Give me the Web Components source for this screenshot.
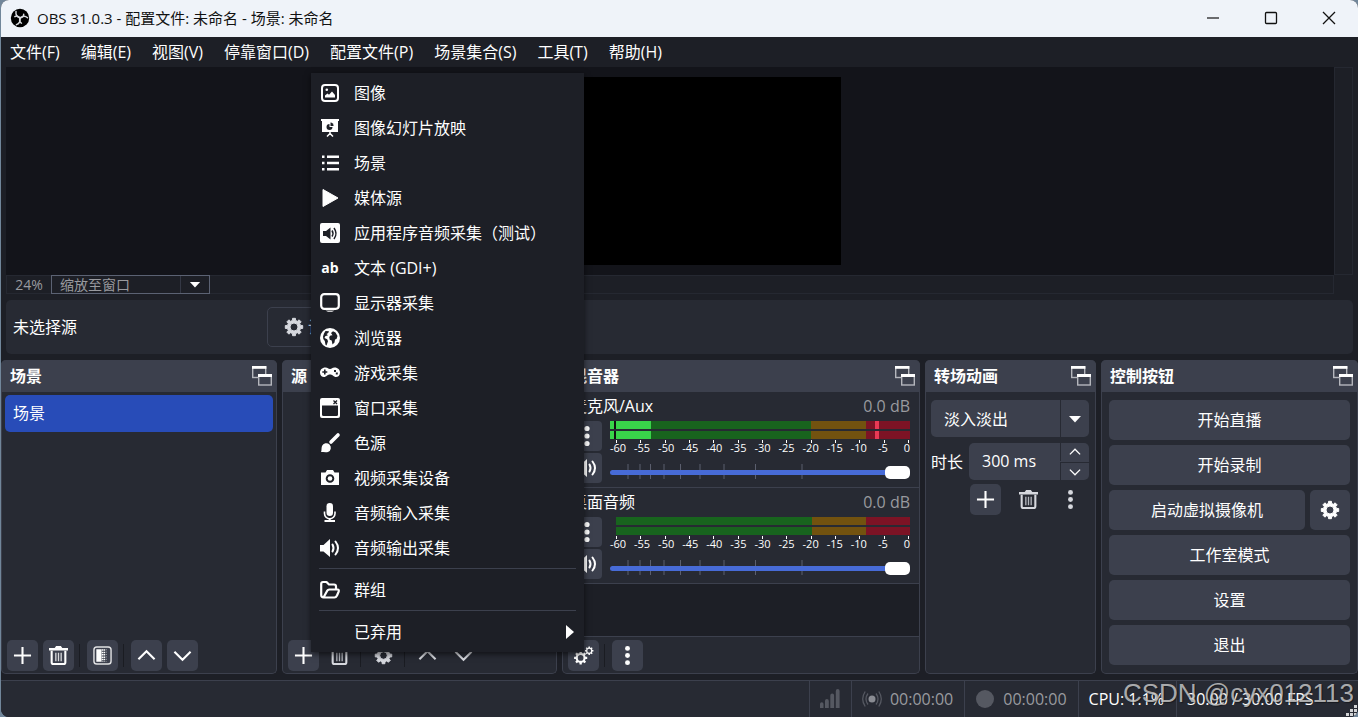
<!DOCTYPE html>
<html lang="zh-CN">
<head>
<meta charset="utf-8">
<title>OBS 31.0.3</title>
<style>
:root {
  --bg: #1d1f26; --panel: #272a33; --line: #3c404d; --btn: #3c404d; --dark: #13141a;
  --muted: #999a9f; --accent: #284cb8;
}
html, body { height: 100%; margin: 0; }
body {
  background: #71869a; color: #fefefe;
  font: 16px/22px "Open Sans", "Noto Sans CJK SC", sans-serif;
}
</style>
</head>
<body>
<obs-app></obs-app>
<script>
const BASE = `*,*::before,*::after{box-sizing:border-box}
button,input,select{font:inherit;color:inherit;margin:0;border:0;padding:0;background:none}
svg{display:block}`;

function define(tag, css, html) {
  customElements.define(tag, class extends HTMLElement {
    connectedCallback() {
      if (this.shadowRoot) return;
      const root = this.attachShadow({ mode: 'open' });
      const t = document.createElement('template');
      t.innerHTML = `<style>${BASE}${css}</style>${typeof html === 'function' ? html(this) : html}`;
      root.append(t.content.cloneNode(true));
    }
  });
}

/* All icons share a 20 x 20 box. */
const gearPath = (cx, cy, r, n, hole) => {
  let d = '';
  for (let i = 0; i < n; i++) {
    const a = i * 2 * Math.PI / n, s = Math.PI / n;
    [[-.62, .76], [-.42, 1], [.42, 1], [.62, .76]].forEach(([o, k], j) => {
      const x = cx + Math.sin(a + o * s) * r * k, y = cy - Math.cos(a + o * s) * r * k;
      d += (i || j ? 'L' : 'M') + x.toFixed(2) + ' ' + y.toFixed(2);
    });
  }
  return d + `Z M${cx - hole} ${cy}a${hole} ${hole} 0 1 0 ${hole * 2} 0a${hole} ${hole} 0 1 0 ${-hole * 2} 0Z`;
};
const swirl = 'M6 3.600C5.400 7 7.400 9.300 10 9.600C12.600 9.800 13.800 8.200 13.700 6.200';
const ICONS = {
  logo: `<circle cx="10" cy="10" r="9.2" fill="#000"/><g fill="none" stroke="#d8dade" stroke-width="1.500" stroke-linecap="round"><path d="${swirl}"/><path d="${swirl}" transform="rotate(120 10 10)"/><path d="${swirl}" transform="rotate(240 10 10)"/></g>`,
  image: `<rect x="2" y="2" width="16" height="16" rx="3" fill="none" stroke="currentColor" stroke-width="2"/><circle cx="6.800" cy="6.800" r="1.300"/><path d="M5 14.500v-2l2.500-2 1.500 1.200 3-3.200 3 3.500v2.500z"/>`,
  slides: `<path fill-rule="evenodd" d="M1 1h18v2h-1v11H2V3H1zM9.500 6a3 3 0 1 0 3 3h-3z"/><path d="M10.500 4.500v3.500h3a3 3 0 0 0-3-3.500z" fill="#1d1f26"/><path d="M10 13v3M10 15.500l-3 3M10 15.500l3 3" fill="none" stroke="currentColor" stroke-width="1.500"/>`,
  list: `<path d="M2 2.500h2.500V5H2zM7 2.500h12V5H7zM2 8.800h2.500v2.500H2zM7 8.800h12v2.500H7zM2 15h2.500v2.500H2zM7 15h12v2.500H7z"/>`,
  play: `<path d="M3 1.500 18 10 3 18.500z" stroke="currentColor" stroke-linejoin="round"/>`,
  appaudio: `<rect width="20" height="20" rx="2"/><path d="M3 8h3L10.500 4.500v12L6 13H3z" fill="#1d1f26"/><path d="M12 7.500q2 3 0 6M14 5q4 5.500 0 11" fill="none" stroke="#1d1f26" stroke-width="1.500"/>`,
  monitor: `<rect x="1.200" y="1.200" width="17.600" height="14.600" rx="3" fill="none" stroke="currentColor" stroke-width="2.200"/><path d="M5.500 17.500h9l-2.500 1.500H8z" opacity=".75"/>`,
  globe: `<circle cx="10" cy="10" r="10"/><path fill="#1d1f26" d="M5.500 3 9 3.200 8.200 5l-1.700 1L8 7.200 5.200 8.200 4.500 10l2.700 1.200.8 2-1.500 4.200-1-.6-.7-3.800-1.500-2L3 8.500l1-3zM11 5l2-1.800 2.500 1.300L17.500 8l-1 3-1.500.5-.5 3-2 2-.8-4-2-.8L9.200 9l1.300-1.500 2-.3z"/>`,
  game: `<path fill-rule="evenodd" d="M5.500 4.500C8 4.500 8 6 10 6s2-1.500 4.500-1.500C18 4.500 20 7 20 9.500c0 3-2 4.500-4 4.500-2.500 0-3-2.500-6-2.500S6.500 14 4 14c-2 0-4-1.500-4-4.500C0 7 2 4.500 5.500 4.500zM4 6.500v1.700H2.300v1.600H4v1.700h1.600V9.800h1.700V8.200H5.600V6.500zM14 7v2h2V7zM15.800 9.500v2h2v-2z"/>`,
  window: `<path fill-rule="evenodd" d="M2 0h16a2 2 0 0 1 2 2v16a2 2 0 0 1-2 2H2a2 2 0 0 1-2-2V2a2 2 0 0 1 2-2zM2 7.500v9a1.500 1.500 0 0 0 1.500 1.500h13a1.500 1.500 0 0 0 1.500-1.500v-9z"/><path d="M13.500 2.500 17 6M17 2.500 13.500 6" stroke="#1d1f26" stroke-width="1.300"/>`,
  brush: `<path d="M18 2 11 9" fill="none" stroke="currentColor" stroke-width="3.600" stroke-linecap="round"/><path d="M1 19c.8-1 .2-4 1-6a4.600 4.600 0 1 1 6 6c-2 .5-5 0-7 0z"/>`,
  camera: `<path fill-rule="evenodd" d="M1 4.500h4.500L7 2h6l1.500 2.500H19V17H1zM10 6.200a4.300 4.300 0 1 0 0 8.600 4.300 4.300 0 0 0 0-8.600z"/><circle cx="10" cy="10.500" r="2.300"/>`,
  mic: `<rect x="6.500" y="0" width="6.500" height="13" rx="3.250"/><path d="M4.500 8.500v2a5.200 5.200 0 0 0 10.500 0v-2" fill="none" stroke="currentColor" stroke-width="1.600"/><path d="M8.700 15h2v2H15v2H4.500v-2h4.200z"/>`,
  speaker: `<path d="M0 7h3.500L10 1v18l-6.500-5.500H0z"/><path d="M12.500 6.500q2 3.500 0 7M15.500 3.500q5 6.500 0 13" fill="none" stroke="currentColor" stroke-width="2" stroke-linecap="round"/>`,
  folder: `<path d="M3.500 17.500H14.500Q16 17.500 17 15.500L18.500 12Q19.500 9.500 17.500 9.500H9.500Q7.500 9.500 6.500 12zM3.500 17.500Q1.200 17.500 1.200 15V4Q1.200 2 3 2h3.500l2.500 2.500h5q2 0 2 2v2.500" fill="none" stroke="currentColor" stroke-width="2.200" stroke-linejoin="round"/>`,
  plus: `<path d="M10 1v18M1 10h18" fill="none" stroke="currentColor" stroke-width="2.200"/>`,
  trash: `<path d="M0 2h6L7.500 0h5L14 2h6v2.800H0z"/><path d="M2.800 5v12q0 2 2 2h10.400q2 0 2-2V5" fill="none" stroke="currentColor" stroke-width="2.200"/><path d="M7.200 7v9M10 7v9M12.800 7v9" fill="none" stroke="currentColor" stroke-width="1.400" opacity=".8"/>`,
  filter: `<rect x="1" y="1" width="18" height="18" rx="3" fill="none" stroke="currentColor" stroke-width="1.500" opacity=".85"/><path d="M3.500 3.500H9v13H3.500z"/><path d="M10 3.500v13M12 3.500v13" fill="none" stroke="currentColor" stroke-width="1.600" stroke-dasharray="1.500 1"/><path d="M14 3.500v13" fill="none" stroke="currentColor" stroke-dasharray="1 1.500" opacity=".6"/>`,
  up: `<path d="M1.500 14 10 5.500l8.500 8.500" fill="none" stroke="currentColor" stroke-width="2.200"/>`,
  down: `<path d="M1.500 6 10 14.500 18.500 6" fill="none" stroke="currentColor" stroke-width="2.200"/>`,
  gear: `<path fill-rule="evenodd" stroke="currentColor" stroke-linejoin="round" d="${gearPath(10, 10, 8.8, 8, 4)}"/>`,
  gears: `<path fill-rule="evenodd" d="${gearPath(7, 12.500, 7, 8, 3)}"/><path fill-rule="evenodd" d="${gearPath(16, 5, 4.500, 8, 2)}"/>`,
  dots: `<circle cx="10" cy="2.500" r="2.600"/><circle cx="10" cy="10" r="2.600"/><circle cx="10" cy="17.500" r="2.600"/>`,
  dock: `<rect x=".7" y="1" width="13" height="10.500" fill="none" stroke="#b4b6bc" stroke-width="1.400"/><path d="M0 0h14.400v2.800H0z"/><rect x="6.700" y="9" width="12.600" height="10" fill="#3c404d" stroke="#b4b6bc" stroke-width="1.400"/><path d="M6 8h14v3H6z"/>`,
  caret: `<path d="M4 7h12l-6 6.500z"/>`,
  next: `<path d="M6 3v14l8-7z"/>`,
  bars: `<path d="M0 15a1.500 1.500 0 0 1 3.500 0v4H0zM5 12a1.500 1.500 0 0 1 3.800 0v7H5zM10.300 6.500a1.500 1.500 0 0 1 3.800 0V19h-3.800zM15.800 2a1.500 1.500 0 0 1 3.800 0v17h-3.800z"/>`,
  live: `<circle cx="10" cy="10" r="3.500" fill="#8a8c93"/><path d="M6 4.500q-4 5.500 0 11M14 4.500q4 5.500 0 11M3.200 2.500q-5 7.500 0 15M16.800 2.500q5 7.500 0 15" fill="none" stroke="currentColor" stroke-width="1.300"/>`,
  disc: `<circle cx="10" cy="10" r="9"/>`,
  min: `<path d="M4 10h12" stroke="currentColor" stroke-width="1.200"/>`,
  max: `<rect x="4.500" y="4.500" width="11" height="11" rx="1" fill="none" stroke="currentColor" stroke-width="1.300"/>`,
  close: `<path d="m4 4 12 12M16 4 4 16" stroke="currentColor" stroke-width="1.300"/>`,
  grip: `<path d="M16 8h3v3h-3zM12 12h3v3h-3zM16 12h3v3h-3zM8 16h3v3H8zM12 16h3v3h-3zM16 16h3v3h-3z" opacity=".8"/>`
};

define('obs-icon', `:host{display:block;flex:none;width:20px;height:20px}
svg{width:100%;height:100%;fill:currentColor;overflow:visible}
b{display:block;font-size:14px;line-height:20px;text-align:center}`,
  el => el.getAttribute('name') === 'ab' ? '<b>ab</b>'
    : `<svg viewBox="0 0 20 20" aria-hidden="true">${ICONS[el.getAttribute('name')]}</svg>`);

define('obs-titlebar', `:host{display:flex;align-items:center;height:37px;padding:0 0 2px 9px;gap:7px;background:#eff3f9;color:#111;font-size:15px}
.t{flex:1;white-space:nowrap}
.w{display:flex}button{width:58px;height:36px;display:grid;place-items:center}`,
  `<obs-icon name="logo"></obs-icon><span class="t">OBS 31.0.3 - 配置文件: 未命名 - 场景: 未命名</span>
  <div class="w"><button aria-label="最小化"><obs-icon name="min"></obs-icon></button><button aria-label="最大化"><obs-icon name="max"></obs-icon></button><button aria-label="关闭"><obs-icon name="close"></obs-icon></button></div>`);

define('obs-menubar', `:host{display:flex;height:30px;background:var(--bg)}
button{padding:0 12px 0 9px;white-space:nowrap}`,
  ['文件(F)', '编辑(E)', '视图(V)', '停靠窗口(D)', '配置文件(P)', '场景集合(S)', '工具(T)', '帮助(H)'].map(t => `<button>${t}</button>`).join(''));

define('obs-preview', `:host{display:grid;grid-template:minmax(208px,1fr) 19px/minmax(0,1fr) 19px;padding:0 5px;flex:1}
.view{background:var(--dark);display:flex;justify-content:center;padding:10px 0 10px 7px}
.canvas{background:#000;height:100%;aspect-ratio:16/9}
.v,.h{border:1px solid #252831}
.h{display:flex;align-items:center;color:var(--muted);font-size:14px;line-height:17px}
.h span{width:44px;text-align:center}
.sel{display:grid;grid-template-columns:1fr 29px;width:159px;height:19px;border:1px solid #5b6273}
.sel::after{content:"";grid-area:1/2;justify-self:start;width:1px;background:#343845}
select{grid-area:1/1/2/3;appearance:none;padding-left:8px;font-size:14px}
obs-icon{grid-area:1/2;color:#fff;width:20px;height:17px;place-self:center;pointer-events:none}`,
  `<div class="view"><div class="canvas"></div></div><div class="v"></div>
  <div class="h"><span>24%</span><label class="sel"><select aria-label="预览缩放"><option>缩放至窗口</option></select><obs-icon name="caret"></obs-icon></label></div>`);

define('obs-sourcebar', `:host{display:flex;align-items:center;height:54px;margin:6px 5px;padding:0 7px;background:var(--panel);border-radius:5px}
span{width:254px}
button{display:flex;align-items:center;gap:4px;height:40px;padding:0 16px;border:1px solid var(--line);border-radius:5px;color:#d6d8de;white-space:nowrap}`,
  `<span>未选择源</span><button disabled><obs-icon name="gear"></obs-icon>设置</button>`);

define('obs-dock', `:host{display:flex;flex-direction:column;position:relative;min-width:0;background:var(--panel);border:1px solid var(--line);border-top:0;border-radius:5px}
header{display:flex;align-items:center;justify-content:space-between;height:32px;margin:0 -1px;padding:0 5px 0 9px;background:var(--btn);border-radius:5px 5px 0 0}
h2{margin:0;font-size:16px;line-height:22px;font-weight:700;white-space:nowrap}
.body{flex:1;min-height:0;display:flex;flex-direction:column}`,
  el => `<header><h2>${el.getAttribute('label')}</h2><button aria-label="浮动"><obs-icon name="dock"></obs-icon></button></header><div class="body"><slot></slot></div>`);

define('obs-toolbar', `:host{display:flex;align-items:center;gap:5px;height:36px;padding:0 5px;margin-top:auto}
::slotted(hr){width:1px;height:23px;border:0;margin:0 2px 0 0;background:#1a1c22}`, `<slot></slot>`);

define('obs-tool', `:host{display:block}
button{display:grid;place-items:center;width:31px;height:31px;border-radius:5px;background:var(--btn)}
button:disabled{background:none;color:#d6d8de}
obs-icon{width:19px;height:19px}`,
  el => `<button aria-label="${el.getAttribute('label')}" ${el.hasAttribute('off') ? 'disabled' : ''}><obs-icon name="${el.getAttribute('icon')}"></obs-icon></button>`);

define('obs-scene-list', `:host{display:block;padding:3px}
ul{list-style:none;margin:0;padding:0}
button{display:block;width:100%;height:37px;padding:0 8px 2px;text-align:left;background:var(--accent);border-radius:5px}`,
  `<ul><li><button aria-current="true">场景</button></li></ul>`);

define('obs-channel', `:host{display:grid;grid-template-columns:31px minmax(0,1fr);column-gap:8px;height:96px;padding:3px 9px 0 8px;border-bottom:1px solid var(--line)}
.head{grid-column:1/3;display:flex;justify-content:space-between;height:25px;line-height:22px}
.head span{color:var(--muted)}
.side{display:grid;gap:2px;align-content:start}
.side button{display:grid;place-items:center;height:30px;border-radius:4px;background:var(--btn)}
.bar{display:grid;grid-template-columns:195fr 54fr 44fr;height:8px;margin:0 0 2px 6px;background:#18641e}
.live .bar{margin-left:0;grid-template-columns:4fr 2fr 35fr 160fr 55fr 44fr}
.bar i:nth-last-child(2){background:#72520f}.bar i:last-child{background:#7c1325}
.live .bar i:nth-child(1),.live .bar i:nth-child(3){background:#39d44a}
.live .bar i:nth-child(2){background:#111}
.live .bar i:last-child{background:linear-gradient(90deg,transparent 9px,#e93a55 9px,#e93a55 13px,transparent 13px) #7c1325}
.ticks,.nums{display:flex;justify-content:space-between}
.ticks{padding:0 1px 0 6px;margin-top:-1px}.ticks i{width:1px;height:3px;background:#fff}
.nums{padding:0 3px 0 8px;font-size:11px;line-height:13px}
.nums span{display:flex;justify-content:center;width:0}
.fader{display:grid;margin-top:8px}
.fader>*{grid-area:1/1}
.head{height:22px}
.nums{margin-top:-2px}
.fader{margin-top:10px}
svg{width:100%;height:16px}
input{appearance:none;width:100%;height:16px}
input::-webkit-slider-runnable-track{height:5px;border-radius:3px;background:#476bd7}
input::-webkit-slider-thumb{appearance:none;width:25px;height:13px;margin-top:-4px;border-radius:5px;background:#fff}`,
  el => {
    const n = [-60, -55, -50, -45, -40, -35, -30, -25, -20, -15, -10, -5, 0];
    const cells = el.hasAttribute('live') ? 6 : 3, bar = `<div class="bar">${'<i></i>'.repeat(cells)}</div>`;
    return `<div class="head">${el.getAttribute('label')}<span>0.0 dB</span></div>
    <div class="side"><button aria-label="更多"><obs-icon name="dots"></obs-icon></button><button aria-label="静音"><obs-icon name="speaker"></obs-icon></button></div>
    <div class="${el.hasAttribute('live') ? 'live' : ''}">${bar}${bar}<div class="ticks">${'<i></i>'.repeat(13)}</div>
    <div class="nums">${n.map(v => `<span>${v}</span>`).join('')}</div>
    <div class="fader"><svg stroke="#5b5f6e">${[6, 10, 13.5, 18, 23.5, 30, 38, 48.5, 64].map(x => `<line x1="${x}%" x2="${x}%" y1="0" y2="15"/>`).join('')}</svg><input type="range" aria-label="音量" value="100"></div></div>`;
  });

define('obs-mixer', `:host{display:flex;flex-direction:column;flex:1}
.rest{flex:1;background:var(--bg);border-bottom:1px solid var(--line)}`,
  `<obs-channel live label="麦克风/Aux"></obs-channel><obs-channel label="桌面音频"></obs-channel><div class="rest"></div>`);

define('obs-transitions', `:host{display:grid;gap:6px;padding:8px 6px 0 5px;grid-template-columns:32px minmax(0,1fr);align-items:center}
.sel{grid-column:1/3;display:grid;grid-template-columns:1fr 29px;height:37px;background:var(--btn);border-radius:5px}
select{appearance:none;grid-area:1/1/2/3;padding-left:13px}
.sel obs-icon{grid-area:1/2;place-self:center;pointer-events:none}
.spin{display:grid;grid-template-columns:minmax(0,1fr) 29px;grid-template-rows:18px 18px;height:37px;background:var(--btn);border-radius:5px;row-gap:1px}
.spin input{grid-row:1/3;width:100%;height:36px;padding-left:13px}
.spin button{display:grid;place-items:center;border-left:1px solid var(--panel)}
.spin button:last-child{border-top:1px solid var(--panel)}
.spin obs-icon{width:12px;height:12px}
.sel::after{content:"";grid-area:1/2;justify-self:start;width:1px;background:var(--panel)}
.row{grid-column:2;display:flex;justify-content:space-between;margin-top:-2px;padding:0 3px 0 1px}
label{white-space:nowrap}`,
  `<div class="sel"><select aria-label="转场"><option>淡入淡出</option></select><obs-icon name="caret"></obs-icon></div>
  <label for="d">时长</label><div class="spin"><input id="d" value="300 ms"><button aria-label="增加"><obs-icon name="up"></obs-icon></button><button aria-label="减少"><obs-icon name="down"></obs-icon></button></div>
  <div class="row"><obs-tool icon="plus" label="添加"></obs-tool><obs-tool off icon="trash" label="删除"></obs-tool><obs-tool off icon="dots" label="更多"></obs-tool></div>`);

define('obs-controls', `:host{display:grid;gap:5px;padding:8px 7px 8px}
button{height:40px;background:var(--btn);border-radius:5px;width:100%}
.r{display:grid;grid-template-columns:minmax(0,1fr) 40px;gap:5px}
.r button:last-child{display:grid;place-items:center}`,
  `<button>开始直播</button><button>开始录制</button><div class="r"><button>启动虚拟摄像机</button><button aria-label="虚拟摄像机设置"><obs-icon name="gear"></obs-icon></button></div><button>工作室模式</button><button>设置</button><button>退出</button>`);

define('obs-add-menu', `:host{display:block;position:absolute;z-index:5;left:28px;bottom:21px;width:273px;padding:2px 0 3px;background:var(--bg);box-shadow:0 2px 6px #0009}
button{display:flex;align-items:center;gap:14px;width:100%;height:35px;padding:0 9px;text-align:left;white-space:nowrap}
span{flex:1}hr{height:1px;border:0;background:var(--line);margin:3px 8px}
.last{padding-left:43px;padding-right:4px}`,
  [['image', '图像'], ['slides', '图像幻灯片放映'], ['list', '场景'], ['play', '媒体源'], ['appaudio', '应用程序音频采集（测试）'], ['ab', '文本 (GDI+)'], ['monitor', '显示器采集'], ['globe', '浏览器'], ['game', '游戏采集'], ['window', '窗口采集'], ['brush', '色源'], ['camera', '视频采集设备'], ['mic', '音频输入采集'], ['speaker', '音频输出采集'], 0, ['folder', '群组'], 0]
    .map(i => i ? `<button role="menuitem"><obs-icon name="${i[0]}"></obs-icon><span>${i[1]}</span></button>` : '<hr>').join('')
  + `<button class="last" role="menuitem"><span>已弃用</span><obs-icon name="next"></obs-icon></button>`);

define('obs-status', `:host{display:flex;justify-content:flex-end;height:37px;margin-top:6px;background:var(--panel);border-top:1px solid var(--line);position:relative;white-space:nowrap}
div{display:flex;align-items:center;gap:8px;padding:0 11px 0 10px;border-left:1px solid var(--line)}
.g{color:var(--muted)}.g obs-icon{color:#555861}
.cpu{padding-right:12px}
.f{width:182px;padding-right:0}.f obs-icon{align-self:flex-end}.f span{flex:1}
.mark{position:absolute;right:4px;top:-3px;font:26px/30px "Liberation Sans",sans-serif;color:#d0d0d0cc;pointer-events:none;text-shadow:1px 1px 1px #0006}`,
  `<div class="g"><obs-icon name="bars"></obs-icon></div><div class="g"><obs-icon name="live"></obs-icon>00:00:00</div><div class="g"><obs-icon name="disc"></obs-icon>00:00:00</div><div class="cpu">CPU: 1.1%</div><div class="f"><span>30.00 / 30.00 FPS</span><obs-icon name="grip"></obs-icon></div><span class="mark">CSDN @cyx012113</span>`);

define('obs-app', `:host{display:flex;flex-direction:column;min-height:100vh;margin-left:1px;background:var(--bg);border-radius:8px;overflow:hidden}
main{display:grid;grid-template-columns:minmax(0,276fr) minmax(0,275fr) minmax(0,358fr) minmax(0,171fr) minmax(0,257fr);gap:5px}`,
  `<obs-titlebar></obs-titlebar><obs-menubar></obs-menubar><obs-preview></obs-preview><obs-sourcebar></obs-sourcebar>
  <main>
    <obs-dock label="场景"><obs-scene-list></obs-scene-list>
      <obs-toolbar><obs-tool icon="plus" label="添加"></obs-tool><obs-tool icon="trash" label="删除"></obs-tool><hr><obs-tool icon="filter" label="滤镜"></obs-tool><hr><obs-tool icon="up" label="上移"></obs-tool><obs-tool icon="down" label="下移"></obs-tool></obs-toolbar></obs-dock>
    <obs-dock label="源">
      <obs-toolbar><obs-tool icon="plus" label="添加"></obs-tool><obs-tool off icon="trash" label="删除"></obs-tool><hr><obs-tool off icon="gear" label="属性"></obs-tool><hr><obs-tool off icon="up" label="上移"></obs-tool><obs-tool off icon="down" label="下移"></obs-tool></obs-toolbar>
      <obs-add-menu role="menu"></obs-add-menu></obs-dock>
    <obs-dock label="混音器"><obs-mixer></obs-mixer>
      <obs-toolbar><obs-tool icon="gears" label="高级音频属性"></obs-tool><hr><obs-tool icon="dots" label="更多"></obs-tool></obs-toolbar></obs-dock>
    <obs-dock label="转场动画"><obs-transitions></obs-transitions></obs-dock>
    <obs-dock label="控制按钮"><obs-controls></obs-controls></obs-dock>
  </main>
  <obs-status></obs-status>`);
</script>
</body>
</html>
